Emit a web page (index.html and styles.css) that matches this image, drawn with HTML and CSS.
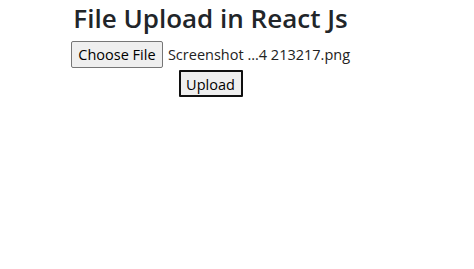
FILE: index.html
```html
<!DOCTYPE html>
<html lang="en">
<head>
    <meta charset="UTF-8">
    <meta name="viewport" content="width=device-width, initial-scale=1.0">
    <title>File Upload in React Js</title>
    <link rel="stylesheet" href="styles.css">
</head>
<body>
    <div class="app">
        <h1>File Upload in React Js</h1>
        <div class="picker">
            <button type="button" class="choose">Choose File</button>
            <span class="file-name">Screenshot ...4 213217.png</span>
        </div>
        <button type="button" class="upload">Upload</button>
    </div>
</body>
</html>
```
FILE: styles.css
```css
body {
    margin: 0;
    font-family: "Open Sans", "Noto Sans", sans-serif;
    color: #212529;
    background-color: #fff;
}
.app {
    width: 421px;
    text-align: center;
}
h1 {
    margin: 0;
    font-size: 26px;
    font-weight: 600;
    line-height: 36px;
}
.picker {
    display: flex;
    justify-content: center;
    align-items: center;
    gap: 5px;
    margin-top: 5px;
}
button {
    font-family: inherit;
    font-size: 14.5px;
    color: #000;
    background-color: #efefef;
    border: 1px solid #767676;
    border-radius: 2px;
    padding: 0 4px;
    height: 27px;
    line-height: 25px;
    white-space: nowrap;
}
.choose {
    width: 92px;
}
.file-name {
    font-size: 14.5px;
    color: #222;
    white-space: nowrap;
}
.upload {
    margin-top: 2px;
    width: 64px;
    height: 27px;
    border: 2px solid #101010;
    border-radius: 1px;
}
```
